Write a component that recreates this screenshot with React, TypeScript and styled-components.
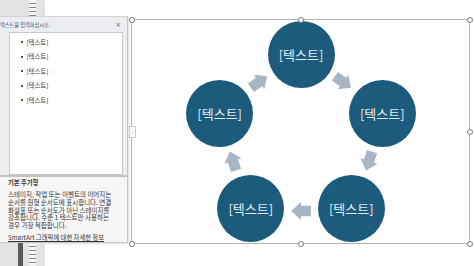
import React from "react";
import styled, { createGlobalStyle } from "styled-components";

const GlobalStyle = createGlobalStyle`
  html, body {
    margin: 0;
    padding: 0;
    background: #ffffff;
  }
  body {
    font-family: "Noto Sans CJK KR", "Noto Sans", sans-serif;
  }
`;

const Screen = styled.div`
  width: 474px;
  height: 266px;
  display: flex;
  overflow: hidden;
  background: #ffffff;
`;

// left column: thumbnail strip pieces + the text pane
const SideColumn = styled.div`
  width: 128px;
  display: flex;
  flex-direction: column;
`;

const Strip = styled.div<{ $h: number }>`
  height: ${(p) => p.$h}px;
  width: 45px;
  background: #e3e3e3;
  display: flex;
  align-items: stretch;
  gap: 4px;
  padding-left: 18px;
  box-sizing: border-box;
`;

const DarkBar = styled.div<{ $show: boolean }>`
  width: 5px;
  background: ${(p) => (p.$show ? "#5a5a5a" : "transparent")};
`;

const Ruler = styled.div`
  width: 7px;
  margin-left: 2px;
  background: repeating-linear-gradient(
    to bottom,
    #f4f4f4 0px,
    #f4f4f4 3px,
    #8a8a8a 3px,
    #8a8a8a 4px
  );
`;

const Pane = styled.div`
  flex: 1;
  display: flex;
  flex-direction: column;
  background: #eceef2;
  border-right: 1px solid #c4c4c4;
  border-bottom: 1px solid #c4c4c4;
  border-top: 1px solid #d4d4d4;
  box-shadow: 1px 1px 2px rgba(0, 0, 0, 0.12);
`;

const PaneTitle = styled.div`
  height: 15px;
  display: flex;
  align-items: center;
  justify-content: space-between;
  padding-right: 6px;
`;

const TitleText = styled.span`
  font-size: 5.2px;
  color: #2c4a70;
  white-space: nowrap;
`;

const Close = styled.span`
  font-family: "DejaVu Sans", sans-serif;
  font-size: 7px;
  color: #666;
`;

const ListBox = styled.div`
  height: 139px;
  margin: 0 4px 0 9px;
  background: #ffffff;
  border: 1px solid #c9c9c9;
  padding-top: 2px;
`;

const Item = styled.div`
  height: 14.5px;
  display: flex;
  align-items: center;
  padding-left: 11px;
  gap: 3px;
  font-size: 6.4px;
  color: #3a3a3a;

  &::before {
    content: "";
    width: 2.4px;
    height: 2.4px;
    border-radius: 50%;
    background: #222;
  }
`;

const Description = styled.div`
  flex: 1;
  background: #f6f6f6;
  border-top: 2px solid #c2c2c2;
  padding: 2px 4px 0 8px;
  color: #333;
`;

const DescHeading = styled.div`
  font-size: 6.3px;
  font-weight: 700;
  line-height: 8px;
  margin-bottom: 4px;
`;

const DescLine = styled.div`
  font-size: 6.5px;
  line-height: 7.75px;
  white-space: nowrap;
`;

const MoreLink = styled.div`
  font-size: 6.3px;
  line-height: 8px;
  margin-top: 4px;
  text-decoration: underline;
  white-space: nowrap;
`;

// right side: the slide canvas with the selected SmartArt frame
const Canvas = styled.div`
  flex: 1;
  padding: 19px 0 0 3px;
`;

const Frame = styled.div`
  position: relative;
  width: 339px;
  height: 225px;
  border: 1px solid #b2b2b2;
  box-sizing: border-box;
`;

const Handle = styled.div`
  position: absolute;
  width: 6px;
  height: 6px;
  margin: -3.5px 0 0 -3.5px;
  border-radius: 50%;
  background: #fff;
  border: 1px solid #7a7a7a;
  box-sizing: border-box;
`;

const PaneToggle = styled.div`
  position: absolute;
  left: -3px;
  top: 106px;
  width: 5px;
  height: 10px;
  background: #fff;
  border: 1px solid #c8c8c8;
  display: flex;
  align-items: center;
  justify-content: center;
  font-size: 5px;
  color: #666;
  font-family: "DejaVu Sans", sans-serif;
`;

const Node = styled.div`
  position: absolute;
  width: 67px;
  height: 67px;
  margin: -33.5px 0 0 -33.5px;
  border-radius: 50%;
  background: #1d5b7c;
  display: flex;
  align-items: center;
  justify-content: center;
  color: #e4ecf2;
  font-size: 13px;
  white-space: nowrap;
`;

const ArrowSvg = styled.svg`
  position: absolute;
  width: 22px;
  height: 22px;
  margin: -11px 0 0 -11px;
`;

const items = ["[텍스트]", "[텍스트]", "[텍스트]", "[텍스트]", "[텍스트]"];

const descLines = [
  "스테이지, 작업 또는 이벤트의 이어지는",
  "순서를 원형 순서도에 표시합니다. 연결",
  "화살표 또는 순서도가 아닌 스테이지를",
  "강조합니다. 수준 1 텍스트만 사용하는",
  "경우 가장 적합합니다.",
];

const CX = 169;
const CY = 119.5;
const R = 85.5;
const AR = 71;

const nodeAngles = [-90, -18, 54, 126, 198];
const arrowAngles = [-54, 18, 90, 162, 234];

const rad = (d: number) => (d * Math.PI) / 180;

const handles: [number, number][] = [
  [0, 0],
  [169, 0],
  [338, 0],
  [338, 112],
  [338, 224],
  [169, 224],
  [0, 224],
];

const App: React.FC = () => {
  return (
    <>
      <GlobalStyle />
      <Screen>
        <SideColumn>
          <Strip $h={16}>
            <DarkBar $show={false} />
            <Ruler />
          </Strip>
          <Pane>
            <PaneTitle>
              <TitleText>텍스트를 입력하십시오.</TitleText>
              <Close>×</Close>
            </PaneTitle>
            <ListBox>
              {items.map((t, i) => (
                <Item key={i}>{t}</Item>
              ))}
            </ListBox>
            <Description>
              <DescHeading>기본 주기형</DescHeading>
              {descLines.map((l, i) => (
                <DescLine key={i}>{l}</DescLine>
              ))}
              <MoreLink>SmartArt 그래픽에 대한 자세한 정보</MoreLink>
            </Description>
          </Pane>
          <Strip $h={23}>
            <DarkBar $show={true} />
            <Ruler />
          </Strip>
        </SideColumn>

        <Canvas>
          <Frame>
            {arrowAngles.map((a, i) => (
              <ArrowSvg
                key={"a" + i}
                viewBox="0 0 20 20"
                style={{
                  left: CX + AR * Math.cos(rad(a)),
                  top: CY + AR * Math.sin(rad(a)),
                  transform: `rotate(${a + 90}deg)`,
                }}
              >
                <polygon
                  points="1,5.2 10,5.2 10,1.8 19,10 10,18.2 10,14.8 1,14.8"
                  fill="#a8b6c4"
                />
              </ArrowSvg>
            ))}
            {nodeAngles.map((a, i) => (
              <Node
                key={"n" + i}
                style={{
                  left: CX + R * Math.cos(rad(a)),
                  top: CY + R * Math.sin(rad(a)),
                }}
              >
                [텍스트]
              </Node>
            ))}
            {handles.map(([x, y], i) => (
              <Handle key={"h" + i} style={{ left: x, top: y }} />
            ))}
            <PaneToggle>›</PaneToggle>
          </Frame>
        </Canvas>
      </Screen>
    </>
  );
};

export default App;
